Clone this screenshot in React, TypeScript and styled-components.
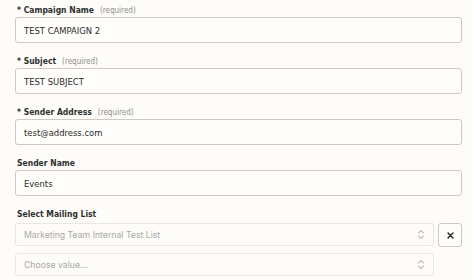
import React from "react";
import styled, { createGlobalStyle } from "styled-components";

const GlobalStyle = createGlobalStyle`
  html, body {
    margin: 0;
    padding: 0;
    background: #ffffff;
  }
  body {
    font-family: "DejaVu Sans Condensed", "Liberation Sans", sans-serif;
  }
`;

const Page = styled.div`
  width: 472px;
  height: 280px;
  background: #fdfcf9;
  box-sizing: border-box;
  padding: 4px 10px 0 15px;
  display: flex;
  flex-direction: column;
  overflow: hidden;
`;

const Field = styled.div`
  display: flex;
  flex-direction: column;
  margin-bottom: 12px;
`;

const Label = styled.div<{ $gap?: number }>`
  display: flex;
  align-items: baseline;
  gap: 6px;
  height: 12px;
  line-height: 12px;
  margin-bottom: ${({ $gap }) => $gap ?? 1}px;
  padding-left: 2px;
  font-size: 8.5px;
  font-weight: 700;
  color: #2f3030;
`;

const Hint = styled.span`
  font-size: 8px;
  font-weight: 400;
  color: #8f8e8a;
`;

const Input = styled.div`
  height: 26px;
  box-sizing: border-box;
  border: 1px solid #cdcac4;
  border-radius: 3px;
  background: #fffefb;
  display: flex;
  align-items: center;
  padding-left: 8px;
  font-size: 9.4px;
  color: #2b2b2b;
`;

const SelectRow = styled.div`
  display: flex;
  gap: 4px;
  margin-bottom: 6px;
`;

const Select = styled.div`
  flex: 1;
  height: 23px;
  box-sizing: border-box;
  border: 1px solid #e9e7e2;
  border-radius: 3px;
  background: #fdfcf9;
  display: flex;
  align-items: center;
  justify-content: space-between;
  padding: 0 8px;
  font-family: Inter, "Liberation Sans", sans-serif;
  font-size: 8.7px;
  color: #a9a8a4;
`;

const Spacer = styled.div`
  width: 24px;
`;

const ClearButton = styled.button`
  width: 24px;
  height: 24px;
  box-sizing: border-box;
  border: 1px solid #cdcac4;
  border-radius: 3px;
  background: #fffefb;
  display: flex;
  align-items: center;
  justify-content: center;
  padding: 0;
`;

const Chevrons = () => (
  <svg width="8" height="11" viewBox="0 0 8 11" fill="none" stroke="#c3c1bc" strokeWidth="1.1" strokeLinecap="round" strokeLinejoin="round">
    <path d="M1.5 4 L4 1.5 L6.5 4" />
    <path d="M1.5 7 L4 9.5 L6.5 7" />
  </svg>
);

const Cross = () => (
  <svg width="7" height="7" viewBox="0 0 8 8" stroke="#2b2b2b" strokeWidth="1.7" strokeLinecap="round">
    <path d="M1.2 1.2 L6.8 6.8 M6.8 1.2 L1.2 6.8" />
  </svg>
);

const fields = [
  { label: "Campaign Name", required: true, value: "TEST CAMPAIGN 2" },
  { label: "Subject", required: true, value: "TEST SUBJECT" },
  { label: "Sender Address", required: true, value: "test@address.com" },
  { label: "Sender Name", required: false, value: "Events" },
];

export default function App() {
  return (
    <>
      <GlobalStyle />
      <Page>
        {fields.map((f) => (
          <Field key={f.label}>
            <Label>
              <span>{f.required ? `* ${f.label}` : f.label}</span>
              {f.required && <Hint>(required)</Hint>}
            </Label>
            <Input>{f.value}</Input>
          </Field>
        ))}
        <Label $gap={3}>
          <span>Select Mailing List</span>
        </Label>
        <SelectRow>
          <Select>
            <span>Marketing Team Internal Test List</span>
            <Chevrons />
          </Select>
          <ClearButton>
            <Cross />
          </ClearButton>
        </SelectRow>
        <SelectRow>
          <Select>
            <span>Choose value...</span>
            <Chevrons />
          </Select>
          <Spacer />
        </SelectRow>
      </Page>
    </>
  );
}
